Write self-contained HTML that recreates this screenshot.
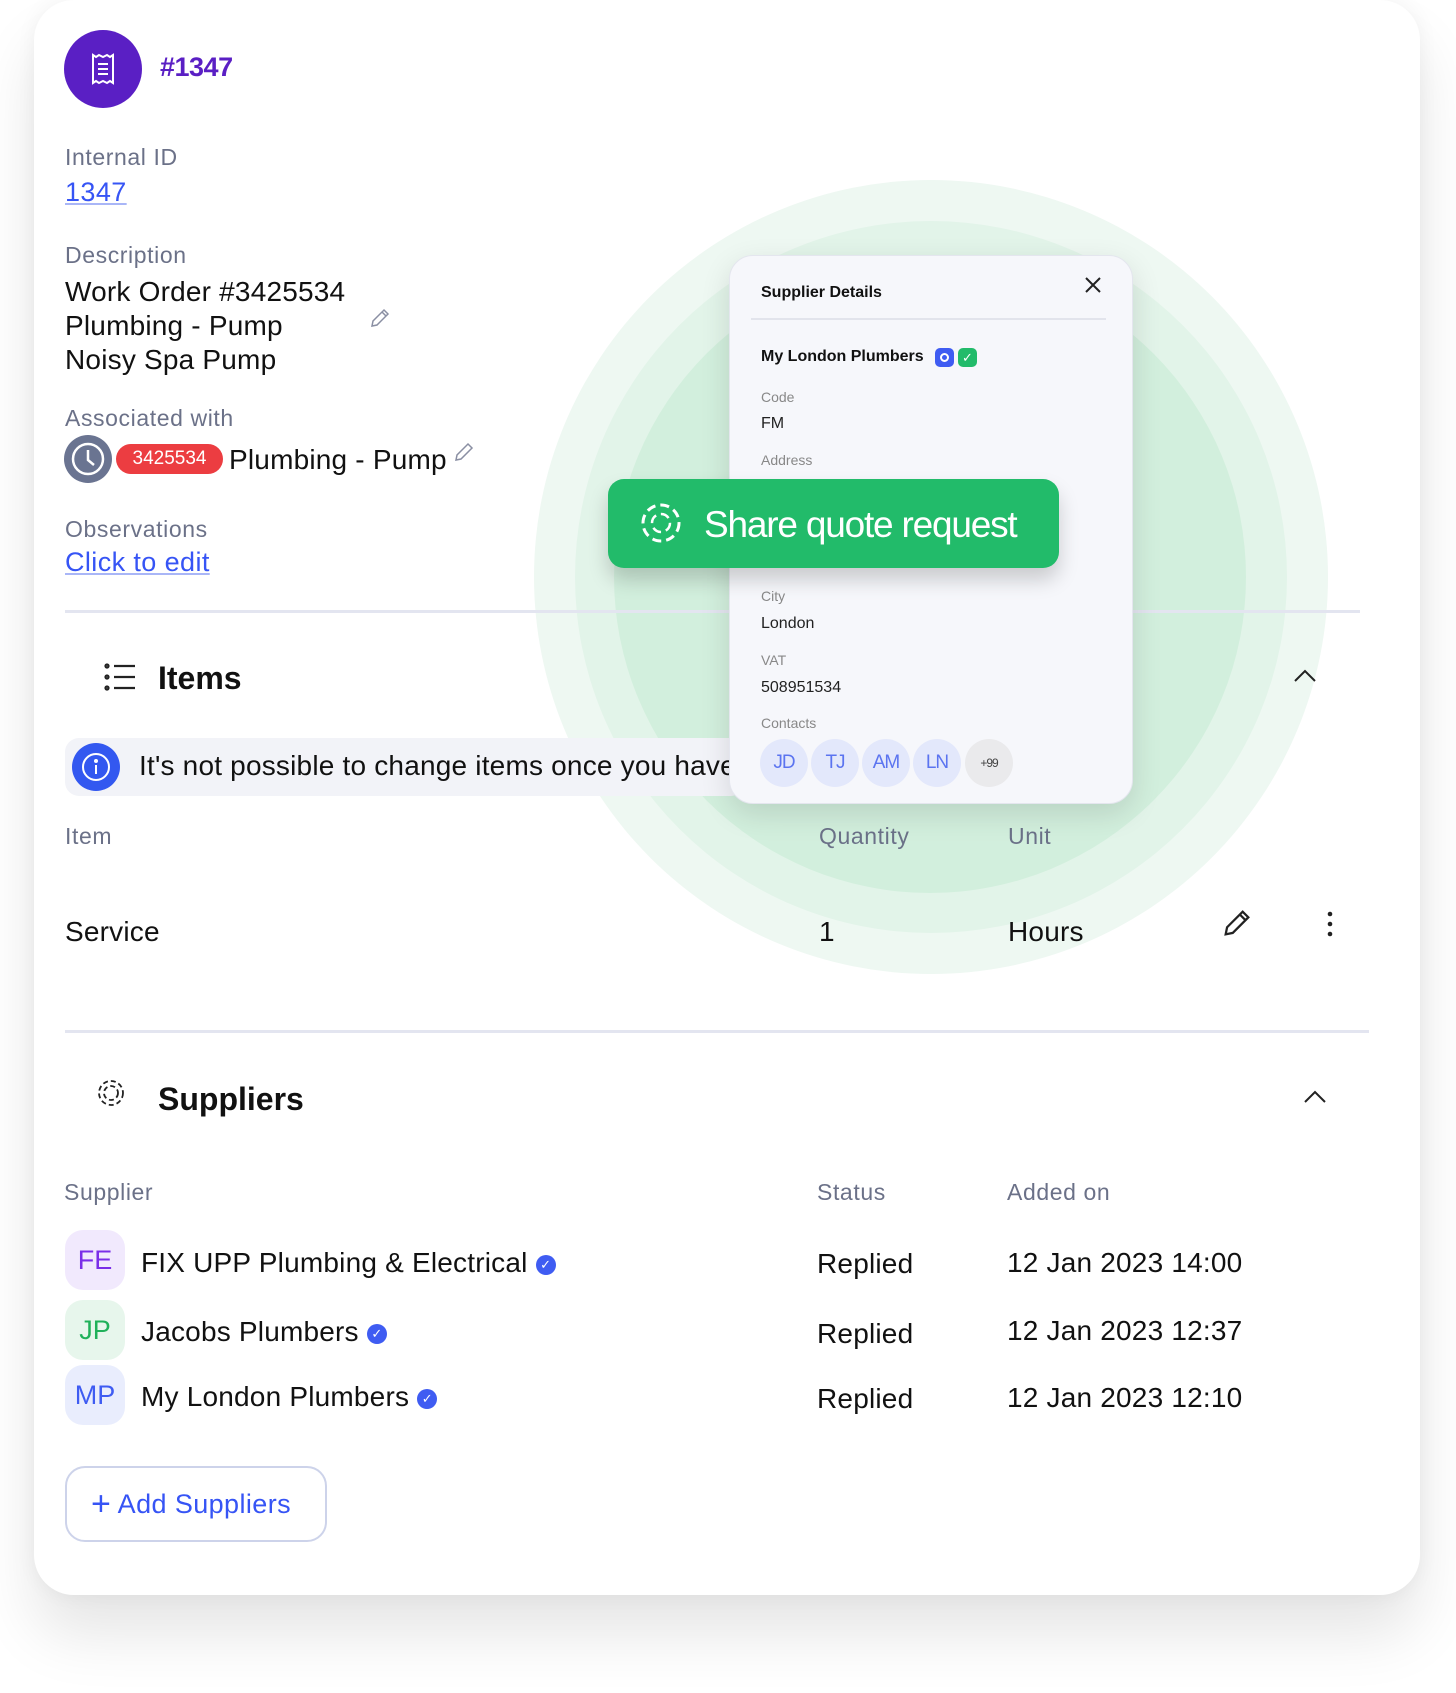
<!DOCTYPE html>
<html><head><meta charset="utf-8"><style>
*{margin:0;padding:0;box-sizing:border-box}
body{width:1456px;height:1693px;background:#fff;font-family:"Liberation Sans",sans-serif;position:relative;overflow:hidden;color:#111}
.a{position:absolute;white-space:nowrap}
.card{position:absolute;left:34px;top:0;width:1386px;height:1595px;background:#fff;border-radius:40px;box-shadow:0 40px 60px rgba(0,0,0,.10),0 0 20px rgba(0,0,0,.05);overflow:hidden}
.lbl{color:#6b7188;font-size:23px;letter-spacing:.6px}
.txt{font-size:28px;letter-spacing:.2px;color:#111}
.lnk{color:#3654f5;font-size:27px;text-decoration:underline;text-decoration-color:#a9b6f7;letter-spacing:.4px}
.ring{position:absolute;border-radius:50%}
.pl{color:#888;font-size:14px}
.pv{color:#222;font-size:16px}
.av{position:absolute;width:48px;height:48px;border-radius:50%;background:#e3e8fb;color:#5b74f0;font-size:19px;text-align:center;line-height:48px;letter-spacing:-1px}
.sav{position:absolute;width:60px;height:60px;border-radius:18px;font-size:27px;text-align:center;line-height:60px}
.ck{display:inline-block;width:20px;height:20px;border-radius:50%;background:#3f5cf2;color:#fff;font-size:13px;line-height:20px;text-align:center;vertical-align:3px;letter-spacing:0;margin-left:8px}
</style></head><body>
<div class="card">
 <div class="ring" style="left:500px;top:180px;width:794px;height:794px;background:#eef8f2"></div>
 <div class="ring" style="left:541px;top:221px;width:712px;height:712px;background:#e2f4e9"></div>
 <div class="ring" style="left:580px;top:261px;width:632px;height:632px;background:#d2efdd"></div>
</div>
<div class="a" style="left:64px;top:30px;width:78px;height:78px;border-radius:50%;background:#5a1fc4"></div>
<svg class="a" style="left:90px;top:53px" width="26" height="32" viewBox="0 0 26 32" fill="none" stroke="#fff" stroke-width="2"><path d="M3 2l3 2 3-2 4 2 4-2 3 2 3-2v28l-3-2-3 2-4-2-4 2-3-2-3 2z"/><path d="M8 11h10M8 16h10M8 21h10"/></svg>
<div class="a" style="left:160px;top:52px;font-size:27px;font-weight:bold;color:#5a1fc4;letter-spacing:-.5px">#1347</div>
<div class="a lbl" style="left:65px;top:144px">Internal ID</div>
<div class="a lnk" style="left:65px;top:177px">1347</div>
<div class="a lbl" style="left:65px;top:242px">Description</div>
<div class="a txt" style="left:65px;top:275px;line-height:34px">Work Order #3425534<br>Plumbing - Pump<br>Noisy Spa Pump</div>
<svg class="a" style="left:368px;top:306px" width="24" height="24" viewBox="0 0 24 24" fill="none" stroke="#8a8fa3" stroke-width="1.5"><path d="M4 20l1-5L16 4l4 4L9 19z M14 6l4 4"/></svg>
<div class="a lbl" style="left:65px;top:405px">Associated with</div>
<div class="a" style="left:64px;top:435px;width:48px;height:48px;border-radius:50%;background:#6a7491"></div>
<svg class="a" style="left:69px;top:440px" width="38" height="38" viewBox="0 0 38 38" fill="none" stroke="#fff" stroke-width="2.5"><circle cx="19" cy="19" r="15"/><path d="M19 10v10l6 5"/></svg>
<div class="a" style="left:116px;top:444px;width:107px;height:30px;border-radius:15px;background:#ec3d41;color:#fff;font-size:19px;text-align:center;line-height:30px">3425534</div>
<div class="a txt" style="left:229px;top:444px">Plumbing - Pump</div>
<svg class="a" style="left:452px;top:440px" width="24" height="24" viewBox="0 0 24 24" fill="none" stroke="#8a8fa3" stroke-width="1.5"><path d="M4 20l1-5L16 4l4 4L9 19z"/></svg>
<div class="a lbl" style="left:65px;top:516px">Observations</div>
<div class="a lnk" style="left:65px;top:547px">Click to edit</div>
<div class="a" style="left:65px;top:610px;width:1295px;height:3px;background:#e3e5f0"></div>
<svg class="a" style="left:104px;top:663px" width="32" height="28" viewBox="0 0 32 28" fill="none" stroke="#222" stroke-width="2.2"><circle cx="3" cy="3" r="1.5"/><circle cx="3" cy="14" r="1.5"/><circle cx="3" cy="25" r="1.5"/><path d="M10 3h21M10 14h21M10 25h21"/></svg>
<div class="a" style="left:158px;top:660px;font-size:32px;font-weight:bold;letter-spacing:0">Items</div>
<svg class="a" style="left:1293px;top:668px" width="24" height="16" viewBox="0 0 24 16" fill="none" stroke="#222" stroke-width="2"><path d="M2 13L12 3l10 10"/></svg>
<div class="a" style="left:65px;top:738px;width:680px;height:58px;border-radius:14px;background:#f2f3f8"></div>
<div class="a" style="left:72px;top:743px;width:48px;height:48px;border-radius:50%;background:#3358f0"></div>
<svg class="a" style="left:80px;top:751px" width="32" height="32" viewBox="0 0 32 32" fill="none" stroke="#fff" stroke-width="2"><circle cx="16" cy="16" r="13"/><path d="M16 14v9"/><circle cx="16" cy="10" r="1" fill="#fff"/></svg>
<div class="a txt" style="left:139px;top:750px;width:590px;overflow:hidden">It's not possible to change items once you have</div>
<div class="a lbl" style="left:65px;top:823px">Item</div>
<div class="a lbl" style="left:819px;top:823px">Quantity</div>
<div class="a lbl" style="left:1008px;top:823px">Unit</div>
<div class="a txt" style="left:65px;top:916px">Service</div>
<div class="a txt" style="left:819px;top:916px">1</div>
<div class="a txt" style="left:1008px;top:916px">Hours</div>
<svg class="a" style="left:1220px;top:906px" width="34" height="34" viewBox="0 0 24 24" fill="none" stroke="#222" stroke-width="1.6"><path d="M4 20l1-5L16 4l4 4L9 19z M14 6l4 4"/></svg>
<svg class="a" style="left:1324px;top:910px" width="12" height="28" viewBox="0 0 12 28" fill="#222"><circle cx="6" cy="4" r="2.3"/><circle cx="6" cy="14" r="2.3"/><circle cx="6" cy="24" r="2.3"/></svg>
<div class="a" style="left:65px;top:1030px;width:1304px;height:3px;background:#e3e5f0"></div>
<svg class="a" style="left:96px;top:1078px" width="30" height="30" viewBox="0 0 30 30" fill="none" stroke="#222" stroke-width="1.8" stroke-dasharray="5 3"><circle cx="15" cy="15" r="12"/><circle cx="15" cy="15" r="7"/></svg>
<div class="a" style="left:158px;top:1081px;font-size:32px;font-weight:bold;letter-spacing:0">Suppliers</div>
<svg class="a" style="left:1303px;top:1089px" width="24" height="16" viewBox="0 0 24 16" fill="none" stroke="#222" stroke-width="2"><path d="M2 13L12 3l10 10"/></svg>
<div class="a lbl" style="left:64px;top:1179px">Supplier</div>
<div class="a lbl" style="left:817px;top:1179px">Status</div>
<div class="a lbl" style="left:1007px;top:1179px">Added on</div>
<div class="sav" style="left:65px;top:1230px;background:#f1e9fd;color:#7a2ee8">FE</div>
<div class="sav" style="left:65px;top:1300px;background:#e7f6ec;color:#20b15a">JP</div>
<div class="sav" style="left:65px;top:1365px;background:#e9edfd;color:#3f5cf2">MP</div>
<div class="a txt" style="left:141px;top:1247px">FIX UPP Plumbing &amp; Electrical<span class="ck">✓</span></div>
<div class="a txt" style="left:141px;top:1316px">Jacobs Plumbers<span class="ck">✓</span></div>
<div class="a txt" style="left:141px;top:1381px">My London Plumbers<span class="ck">✓</span></div>
<div class="a txt" style="left:817px;top:1248px">Replied</div>
<div class="a txt" style="left:817px;top:1318px">Replied</div>
<div class="a txt" style="left:817px;top:1383px">Replied</div>
<div class="a txt" style="left:1007px;top:1247px">12 Jan 2023 14:00</div>
<div class="a txt" style="left:1007px;top:1315px">12 Jan 2023 12:37</div>
<div class="a txt" style="left:1007px;top:1382px">12 Jan 2023 12:10</div>
<div class="a" style="left:65px;top:1466px;width:262px;height:76px;border:2px solid #cdd3ea;border-radius:20px;color:#3654f5;font-size:27px;line-height:72px;padding-left:24px;letter-spacing:.4px"><span style="font-size:34px;vertical-align:-2px">+</span> Add Suppliers</div>
<div class="a" style="left:729px;top:255px;width:404px;height:549px;border-radius:24px;background:#f6f7fb;border:1px solid #e4e6ee;box-shadow:0 10px 30px rgba(0,0,0,.12)"></div>
<div class="a" style="left:761px;top:284px;font-size:16px;font-weight:bold;color:#111">Supplier Details</div>
<svg class="a" style="left:1084px;top:276px" width="18" height="18" viewBox="0 0 18 18" stroke="#222" stroke-width="2"><path d="M2 2l14 14M16 2L2 16"/></svg>
<div class="a" style="left:751px;top:318px;width:355px;height:2px;background:#e2e4ec"></div>
<div class="a" style="left:761px;top:348px;font-size:16px;font-weight:bold;color:#111">My London Plumbers</div>
<div class="a" style="left:935px;top:348px;width:19px;height:19px;border-radius:5px;background:#3f5cf2"></div>
<div class="a" style="left:940px;top:353px;width:9px;height:9px;border-radius:50%;border:2px solid #fff"></div>
<div class="a" style="left:958px;top:348px;width:19px;height:19px;border-radius:5px;background:#22bb6a;color:#fff;font-size:13px;text-align:center;line-height:19px">✓</div>
<div class="a pl" style="left:761px;top:389px">Code</div>
<div class="a pv" style="left:761px;top:415px">FM</div>
<div class="a pl" style="left:761px;top:452px">Address</div>
<div class="a pl" style="left:761px;top:588px">City</div>
<div class="a pv" style="left:761px;top:615px">London</div>
<div class="a pl" style="left:761px;top:652px">VAT</div>
<div class="a pv" style="left:761px;top:679px">508951534</div>
<div class="a pl" style="left:761px;top:715px">Contacts</div>
<div class="av" style="left:760px;top:739px">JD</div>
<div class="av" style="left:811px;top:739px">TJ</div>
<div class="av" style="left:862px;top:739px">AM</div>
<div class="av" style="left:913px;top:739px">LN</div>
<div class="av" style="left:965px;top:739px;background:#eaeaec;color:#444;font-size:12px">+99</div>
<div class="a" style="left:608px;top:479px;width:451px;height:89px;border-radius:16px;background:#22bb6a;box-shadow:0 12px 20px rgba(0,0,0,.18)"></div>
<svg class="a" style="left:640px;top:502px" width="42" height="42" viewBox="0 0 42 42" fill="none" stroke="#fff" stroke-width="3" stroke-dasharray="9 5"><circle cx="21" cy="21" r="18"/><circle cx="21" cy="21" r="9" stroke-width="2.5"/></svg>
<div class="a" style="left:704px;top:504px;font-size:37px;color:#fff;letter-spacing:-1.2px">Share quote request</div>
</body></html>
